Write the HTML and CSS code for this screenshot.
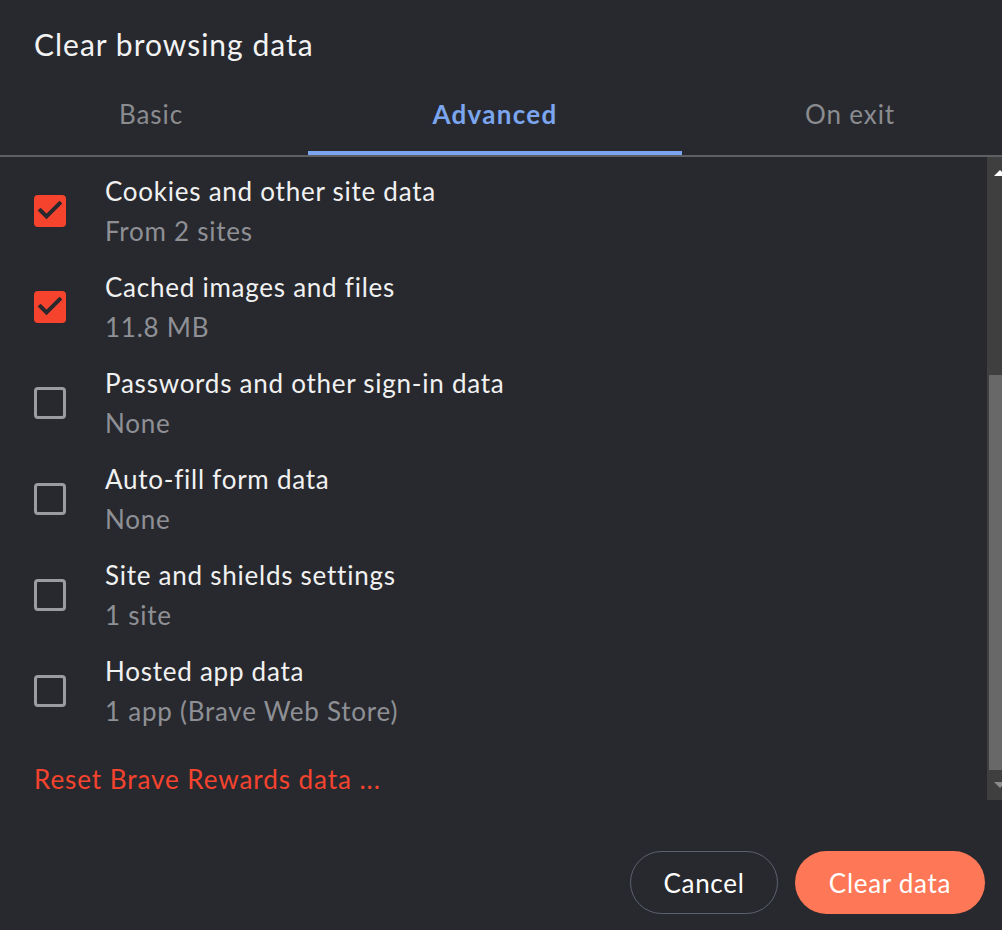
FILE: index.html
```html
<!DOCTYPE html>
<html>
<head>
<meta charset="utf-8">
<link rel="stylesheet" href="styles.css">
</head>
<body>
<div class="dialog">
  <div class="title">Clear browsing data</div>
  <div class="tabs">
    <div class="tab first">Basic</div>
    <div class="tab active">Advanced</div>
    <div class="tab last">On exit</div>
  </div>
  <div class="body">
    <div class="list">
      <div class="row">
        <div class="cb checked"><svg viewBox="0 0 32 32" width="32" height="32"><path d="M6.5 15.5 L12.5 21.5 L25.5 8.5" fill="none" stroke="#28292e" stroke-width="4" stroke-linecap="square"/></svg></div>
        <div class="text"><div class="label">Cookies and other site data</div><div class="sub">From 2 sites</div></div>
      </div>
      <div class="row">
        <div class="cb checked"><svg viewBox="0 0 32 32" width="32" height="32"><path d="M6.5 15.5 L12.5 21.5 L25.5 8.5" fill="none" stroke="#28292e" stroke-width="4" stroke-linecap="square"/></svg></div>
        <div class="text"><div class="label">Cached images and files</div><div class="sub">11.8 MB</div></div>
      </div>
      <div class="row">
        <div class="cb"></div>
        <div class="text"><div class="label">Passwords and other sign-in data</div><div class="sub">None</div></div>
      </div>
      <div class="row">
        <div class="cb"></div>
        <div class="text"><div class="label">Auto-fill form data</div><div class="sub">None</div></div>
      </div>
      <div class="row">
        <div class="cb"></div>
        <div class="text"><div class="label">Site and shields settings</div><div class="sub">1 site</div></div>
      </div>
      <div class="row">
        <div class="cb"></div>
        <div class="text"><div class="label">Hosted app data</div><div class="sub">1 app (Brave Web Store)</div></div>
      </div>
      <div class="reset">Reset Brave Rewards data ...</div>
    </div>
    <div class="scrollbar">
      <div class="arrow up"></div>
      <div class="track"><div class="thumb"></div></div>
      <div class="arrow down"></div>
    </div>
  </div>
  <div class="footer">
    <button class="btn cancel">Cancel</button>
    <button class="btn primary">Clear data</button>
  </div>
</div>
</body>
</html>
```

FILE: styles.css
```css
html, body {
  margin: 0;
  padding: 0;
  background: #28292e;
}
body {
  width: 1002px;
  height: 930px;
  overflow: hidden;
  font-family: Lato, "Noto Sans", sans-serif;
  color: #f1f1f2;
}
.dialog {
  display: flex;
  flex-direction: column;
  width: 1002px;
  height: 930px;
}
.title {
  height: 80px;
  padding-left: 34px;
  padding-top: 8px;
  display: flex;
  align-items: center;
  box-sizing: border-box;
  font-size: 30px;
  letter-spacing: 1px;
  color: #f3f3f4;
}
.tabs {
  display: grid;
  grid-template-columns: 308px 374px 1fr;
  height: 77px;
  box-sizing: border-box;
  border-bottom: 2px solid #5e5f63;
}
.tab {
  display: flex;
  align-items: center;
  justify-content: center;
  padding-bottom: 8px;
  font-size: 26px;
  letter-spacing: 0.9px;
  color: #8a8c90;
  box-sizing: border-box;
}
.tab.first {
  padding-right: 6px;
}
.tab.last {
  padding-left: 16px;
}
.tab.active {
  color: #7ba6ef;
  font-weight: 700;
  letter-spacing: 1.3px;
  border-bottom: 4px solid #7ba6ef;
  border-radius: 4px 4px 0 0;
  padding-bottom: 4px;
}
.body {
  display: flex;
  height: 643px;
}
.list {
  flex: 1;
  padding: 6px 0 0 34px;
}
.row {
  display: flex;
  align-items: center;
  height: 96px;
  box-sizing: border-box;
}
.cb {
  width: 32px;
  height: 32px;
  box-sizing: border-box;
  border: 3.5px solid #9a9ca1;
  border-radius: 4px;
  margin-right: 39px;
  flex: none;
}
.cb.checked {
  border: none;
  background: #f6432d;
}
.cb svg {
  display: block;
}
.label, .sub, .reset {
  font-size: 26px;
  line-height: 40px;
  letter-spacing: 0.75px;
}
.label {
  color: #f1f1f2;
}
.sub {
  color: #8e9095;
}
.reset {
  margin-top: 20px;
  letter-spacing: 0.95px;
  color: #f5432e;
}
.scrollbar {
  width: 15px;
  background: #3f3f40;
  display: flex;
  flex-direction: column;
}
.arrow {
  height: 20px;
  position: relative;
}
.arrow.up::after {
  content: "";
  position: absolute;
  left: 7px;
  top: 13px;
  border-left: 6px solid transparent;
  border-right: 6px solid transparent;
  border-bottom: 6px solid #ffffff;
}
.arrow.down {
  height: 30px;
}
.arrow.down::after {
  content: "";
  position: absolute;
  left: 7px;
  top: 12px;
  border-left: 6px solid transparent;
  border-right: 6px solid transparent;
  border-top: 6px solid #8a8a8a;
}
.track {
  flex: 1;
  display: flex;
  flex-direction: column;
  justify-content: flex-end;
}
.thumb {
  height: 395px;
  margin-left: 2px;
  background: #686868;
}
.footer {
  display: flex;
  justify-content: flex-end;
  gap: 17px;
  padding: 51px 17px 0 0;
}
.btn {
  height: 63px;
  border-radius: 32px;
  font-family: Lato, "Noto Sans", sans-serif;
  font-size: 26px;
  letter-spacing: 0.7px;
  color: #ffffff;
  box-sizing: border-box;
}
.cancel {
  width: 148px;
  background: transparent;
  border: 1.5px solid #5d6271;
}
.primary {
  width: 190px;
  background: #fe7756;
  border: none;
}
```
